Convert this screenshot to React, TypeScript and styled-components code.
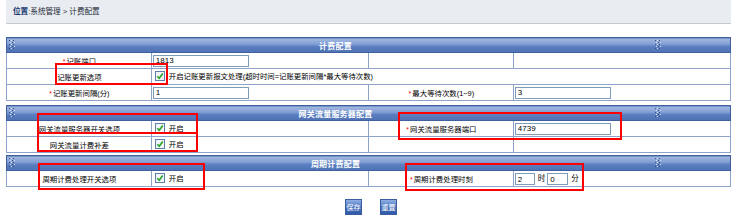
import React from 'react';
import styled, { createGlobalStyle } from 'styled-components';

const GlobalStyle = createGlobalStyle`
    body {
        margin: 0;
        background: #ffffff;
        font-family: "Liberation Sans", "Noto Sans CJK SC", sans-serif;
        color: #000;
    }
`;

const Page = styled.div`
    position: relative;
    width: 735px;
    height: 218px;
    padding: 0 4px 0 6px;
    box-sizing: border-box;
    overflow: hidden;
`;

const Breadcrumb = styled.div`
    height: 23px;
    line-height: 23px;
    padding-left: 7px;
    background: #e9ecf0;
    border-bottom: 1px solid #c6cacf;
    font-size: 7.6px;
    color: #1e2a3a;

    b {
        color: #13346e;
        font-weight: bold;
    }
`;

const Table = styled.table<{ $gap: number }>`
    width: 725px;
    margin-top: ${p => p.$gap}px;
    border-collapse: collapse;
    table-layout: fixed;
    border: 1px solid #5574ad;
`;

const HeaderCell = styled.th`
    height: 14px;
    padding: 0;
    border: 1px solid #3f629f;
    background: linear-gradient(to bottom, #a3b9e0 0%, #7d9bd2 45%, #5b7fc0 55%, #4e72b5 100%);
`;

const HeaderInner = styled.div`
    display: flex;
    align-items: center;
    height: 14px;
    padding: 0 68px 0 2px;
`;

const Title = styled.span`
    flex: 1;
    text-align: center;
    color: #fff;
    font-size: 8px;
    font-weight: bold;
    letter-spacing: 0.2px;
`;

const Row = styled.tr`
    height: 16px;
    background: #fff;
`;

const Cell = styled.td<{ $label?: boolean }>`
    border: 1px solid #8ea3cc;
    padding: 0 0 0 1px;
    font-size: 7.4px;
    white-space: nowrap;
    text-align: ${p => (p.$label ? 'center' : 'left')};
    vertical-align: middle;
`;

const Star = styled.span`
    color: #ff0000;
    font-size: 7px;
    margin-right: 1px;
`;

const Field = styled.input<{ $w?: number }>`
    width: ${p => p.$w ?? 96}px;
    height: 12px;
    box-sizing: border-box;
    border: 1px solid #7f9db9;
    padding: 0 2px;
    margin: 0;
    font-family: "Liberation Sans", sans-serif;
    font-size: 8px;
    vertical-align: middle;
    outline: none;
`;

const CheckWrap = styled.span`
    display: inline-flex;
    align-items: center;
    gap: 4px;
    margin-left: 2px;
`;

const Unit = styled.span`
    margin: 0 2px 0 3px;
    font-size: 7.5px;
`;

const ButtonBar = styled.div`
    display: flex;
    justify-content: center;
    gap: 18px;
    margin-top: 12px;
    padding-left: 5px;
`;

const Button = styled.button`
    width: 17px;
    height: 16px;
    padding: 0;
    border: 1px solid #3a5e9e;
    background: linear-gradient(to bottom, #8eaee2 0%, #4f78c2 50%, #2d56a6 100%);
    color: #fff;
    font-family: "Noto Sans CJK SC", sans-serif;
    font-size: 7px;
    line-height: 14px;
`;

const Mark = styled.div<{ $x: number; $y: number; $w: number; $h: number }>`
    position: absolute;
    left: ${p => p.$x}px;
    top: ${p => p.$y}px;
    width: ${p => p.$w}px;
    height: ${p => p.$h}px;
    border: 2px solid #ff0000;
    box-sizing: border-box;
    pointer-events: none;
`;

function Grip() {
    const dots = [];
    for (let r = 0; r < 5; r++) {
        for (let c = 0; c < 3; c++) {
            dots.push(<rect key={`${r}-${c}`} x={c * 2 + (r % 2)} y={r * 2} width="1" height="1" fill={(r + c) % 2 ? '#dbe4f4' : '#334f86'} />);
        }
    }
    return (
        <svg width="7" height="10" viewBox="0 0 7 10">
            {dots}
        </svg>
    );
}

function Check({ text }: { text: string }) {
    return (
        <CheckWrap>
            <svg width="10" height="10" viewBox="0 0 10 10">
                <rect x="0.5" y="0.5" width="9" height="9" fill="#f3f5f8" stroke="#5f7fa8" />
                <path d="M2.3 5.2 L4.2 7.2 L7.8 2.6" fill="none" stroke="#22a322" strokeWidth="1.6" />
            </svg>
            <span>{text}</span>
        </CheckWrap>
    );
}

function Section({ title, gap, children }: { title: string; gap: number; children: React.ReactNode }) {
    return (
        <Table $gap={gap}>
            <colgroup>
                <col style={{ width: '20%' }} />
                <col style={{ width: '30%' }} />
                <col style={{ width: '20%' }} />
                <col style={{ width: '30%' }} />
            </colgroup>
            <thead>
                <tr>
                    <HeaderCell colSpan={4}>
                        <HeaderInner>
                            <Grip />
                            <Title>{title}</Title>
                            <Grip />
                        </HeaderInner>
                    </HeaderCell>
                </tr>
            </thead>
            <tbody>{children}</tbody>
        </Table>
    );
}

export default function App() {
    return (
        <Page>
            <GlobalStyle />
            <Breadcrumb>
                <b>位置</b>:系统管理 &gt; 计费配置
            </Breadcrumb>

            <Section title="计费配置" gap={13}>
                <Row>
                    <Cell $label><Star>*</Star>记账端口</Cell>
                    <Cell><Field readOnly defaultValue="1813" /></Cell>
                    <Cell></Cell>
                    <Cell></Cell>
                </Row>
                <Row>
                    <Cell $label>记账更新选项</Cell>
                    <Cell colSpan={3}>
                        <Check text="开启记账更新报文处理(超时时间=记账更新间隔*最大等待次数)" />
                    </Cell>
                </Row>
                <Row>
                    <Cell $label><Star>*</Star>记账更新间隔(分)</Cell>
                    <Cell><Field readOnly defaultValue="1" /></Cell>
                    <Cell $label><Star>*</Star>最大等待次数(1~9)</Cell>
                    <Cell><Field readOnly defaultValue="3" /></Cell>
                </Row>
            </Section>

            <Section title="网关流量服务器配置" gap={4}>
                <Row>
                    <Cell $label>网关流量服务器开关选项</Cell>
                    <Cell><Check text="开启" /></Cell>
                    <Cell $label><Star>*</Star>网关流量服务器端口</Cell>
                    <Cell><Field readOnly defaultValue="4739" /></Cell>
                </Row>
                <Row>
                    <Cell $label>网关流量计费补差</Cell>
                    <Cell><Check text="开启" /></Cell>
                    <Cell></Cell>
                    <Cell></Cell>
                </Row>
            </Section>

            <Section title="周期计费配置" gap={2}>
                <Row>
                    <Cell $label>周期计费处理开关选项</Cell>
                    <Cell><Check text="开启" /></Cell>
                    <Cell $label><Star>*</Star>周期计费处理时刻</Cell>
                    <Cell>
                        <Field readOnly defaultValue="2" $w={20} />
                        <Unit>时</Unit>
                        <Field readOnly defaultValue="0" $w={21} />
                        <Unit>分</Unit>
                    </Cell>
                </Row>
            </Section>

            <ButtonBar>
                <Button>保存</Button>
                <Button>重置</Button>
            </ButtonBar>

            <Mark $x={55} $y={63} $w={113} $h={22} />
            <Mark $x={37} $y={113} $w={161} $h={21} />
            <Mark $x={37} $y={132} $w={161} $h={20} />
            <Mark $x={398} $y={112} $w={224} $h={28} />
            <Mark $x={38} $y={163} $w={167} $h={27} />
            <Mark $x={405} $y={163} $w={179} $h={28} />
        </Page>
    );
}
